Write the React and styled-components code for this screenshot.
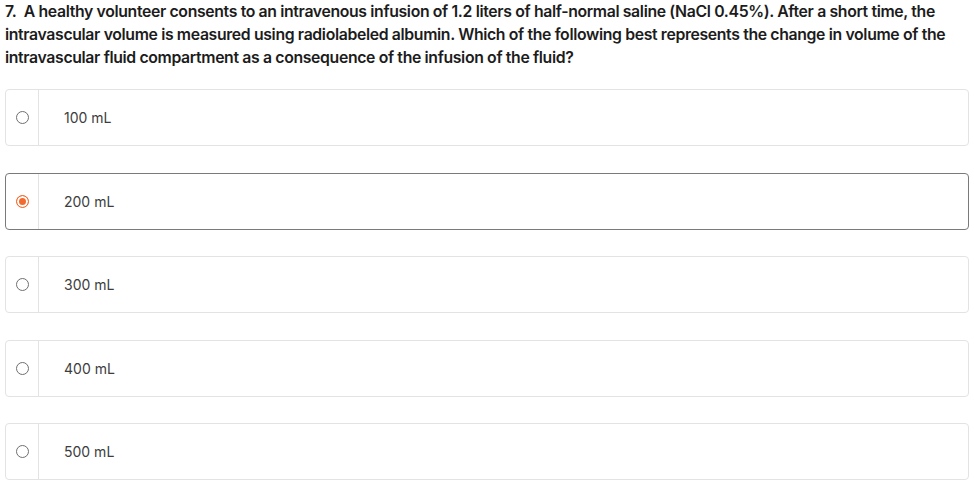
import styled, { createGlobalStyle } from "styled-components"

const GlobalStyle = createGlobalStyle`
    body {
        margin: 0;
        background: #fff;
        font-family: Inter, "Liberation Sans", sans-serif;
    }
`

const options = ['100 mL', '200 mL', '300 mL', '400 mL', '500 mL']
const selected = 1

export default function App() {
    return (
        <Container>
            <GlobalStyle />
            <Question>
                7.&nbsp; A healthy volunteer consents to an intravenous infusion of 1.2 liters of half-normal saline (NaCl 0.45%). After a short time, the intravascular volume is measured using radiolabeled albumin. Which of the following best represents the change in volume of the intravascular fluid compartment as a consequence of the infusion of the fluid?
            </Question>
            <OptionList>
                {options.map((label, i) => (
                    <OptionCard key={label} $active={i === selected}>
                        <RadioCell>
                            <Radio $active={i === selected} />
                        </RadioCell>
                        <OptionLabel>{label}</OptionLabel>
                    </OptionCard>
                ))}
            </OptionList>
        </Container>
    )
}

const Container = styled.div`
    width: 964px;
    padding: 0 0 0 5px;
    display: flex;
    flex-direction: column;
`

const Question = styled.p`
    margin: 0;
    font-size: 15.8px;
    font-weight: 600;
    line-height: 23px;
    color: #1c1c1c;
    letter-spacing: -0.35px;
`

const OptionList = styled.div`
    display: flex;
    flex-direction: column;
    gap: 26.5px;
    margin-top: 20px;
`

const OptionCard = styled.label`
    box-sizing: border-box;
    height: 57px;
    display: flex;
    align-items: center;
    border: 1px solid ${p => p.$active ? '#7a7a7a' : '#e3e3e3'};
    border-radius: 4px;
    background: #fff;
`

const RadioCell = styled.div`
    width: 32px;
    height: 100%;
    display: flex;
    align-items: center;
    justify-content: center;
    border-right: 1px solid #e3e3e3;
`

const Radio = styled.span`
    box-sizing: border-box;
    width: 13px;
    height: 13px;
    border-radius: 50%;
    border: 1px solid ${p => p.$active ? '#f26a2e' : '#6f6f6f'};
    background: ${p => p.$active ? '#f26a2e' : '#fff'};
    box-shadow: ${p => p.$active ? 'inset 0 0 0 2px #fff' : 'none'};
`

const OptionLabel = styled.span`
    margin-left: 25px;
    font-size: 14px;
    color: #3d3d3d;
`
